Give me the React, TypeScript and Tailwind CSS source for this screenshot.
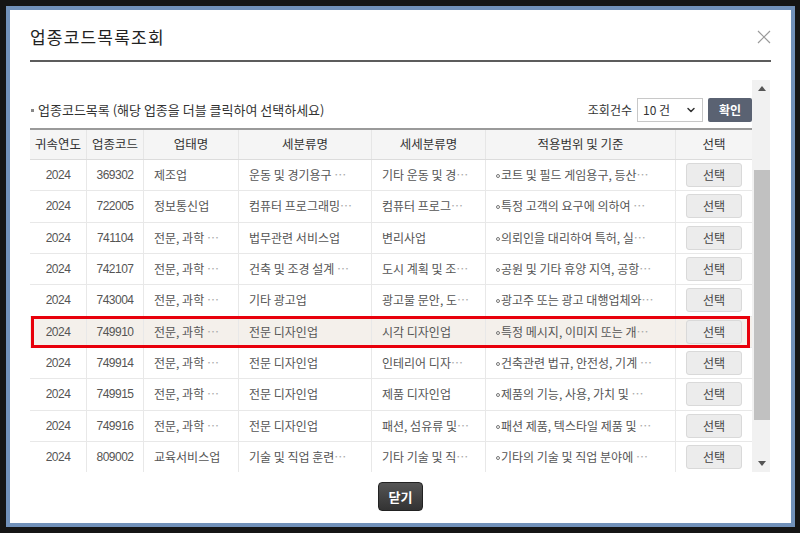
import { ChevronDown } from "lucide-react";

const font = { fontFamily: '"Noto Sans CJK KR", "Liberation Sans", sans-serif' };

const columns = [
  { label: "귀속연도", width: "w-[57px]", align: "center" },
  { label: "업종코드", width: "w-[57px]", align: "center" },
  { label: "업태명", width: "w-[95px]", align: "left" },
  { label: "세분류명", width: "w-[133px]", align: "left" },
  { label: "세세분류명", width: "w-[114px]", align: "left" },
  { label: "적용범위 및 기준", width: "w-[190px]", align: "left" },
  { label: "선택", width: "w-[76px]", align: "center" },
];

// "◦" marks the bullet of the scope column, a trailing "…" is drawn lighter
const rows = [
  ["2024", "369302", "제조업", "운동 및 경기용구 …", "기타 운동 및 경…", "◦코트 및 필드 게임용구, 등산…"],
  ["2024", "722005", "정보통신업", "컴퓨터 프로그래밍…", "컴퓨터 프로그…", "◦특정 고객의 요구에 의하여 …"],
  ["2024", "741104", "전문, 과학 …", "법무관련 서비스업", "변리사업", "◦의뢰인을 대리하여 특허, 실…"],
  ["2024", "742107", "전문, 과학 …", "건축 및 조경 설계 …", "도시 계획 및 조…", "◦공원 및 기타 휴양 지역, 공항…"],
  ["2024", "743004", "전문, 과학 …", "기타 광고업", "광고물 문안, 도…", "◦광고주 또는 광고 대행업체와…"],
  ["2024", "749910", "전문, 과학 …", "전문 디자인업", "시각 디자인업", "◦특정 메시지, 이미지 또는 개…"],
  ["2024", "749914", "전문, 과학 …", "전문 디자인업", "인테리어 디자…", "◦건축관련 법규, 안전성, 기계 …"],
  ["2024", "749915", "전문, 과학 …", "전문 디자인업", "제품 디자인업", "◦제품의 기능, 사용, 가치 및 …"],
  ["2024", "749916", "전문, 과학 …", "전문 디자인업", "패션, 섬유류 및…", "◦패션 제품, 텍스타일 제품 및 …"],
  ["2024", "809002", "교육서비스업", "기술 및 직업 훈련…", "기타 기술 및 직…", "◦기타의 기술 및 직업 분야에 …"],
];

const Cell = ({ text }: { text: string }) => {
  let body = text;
  const bullet = body.startsWith("◦");
  if (bullet) body = body.slice(1);
  const dots = body.endsWith("…");
  if (dots) body = body.slice(0, -1);
  return (
    <span className="whitespace-pre">
      {bullet && (
        <span className="inline-block w-[4px] h-[4px] rounded-full border border-[#777] mr-[1px] align-middle -mt-[2px]" />
      )}
      {body}
      {dots && <span className="text-[#aaa]">…</span>}
    </span>
  );
};

const App = () => {
  return (
    <div
      className="w-[800px] h-[533px] bg-[#151515] pt-[6px] pl-[6px] pr-[5px] pb-[6px]"
      style={font}
    >
      <div className="h-full border-4 border-[#7191ba] bg-white flex flex-col">
        {/* Title */}
        <div className="h-[50px] px-[20px] flex items-center justify-between pt-[4px]">
          <h1 className="text-[17px] tracking-[1.2px] text-[#222]">업종코드목록조회</h1>
          <svg width="14" height="14" viewBox="0 0 14 14">
            <path d="M1 1 L13 13 M13 1 L1 13" stroke="#9a9a9a" strokeWidth="1.2" fill="none" />
          </svg>
        </div>
        <div className="mx-[20px] h-[2px] bg-[#5c5c5c]" />

        {/* Scroll area */}
        <div className="mt-[18px] ml-[20px] mr-[21px] h-[392px] flex overflow-hidden">
          <div className="flex-1 overflow-hidden pt-[18px]">
            <div className="h-[24px] flex items-center justify-between">
              <div className="flex items-center text-[13px] text-[#333] pl-[1px]">
                <span className="w-[3px] h-[3px] bg-[#888] mr-[4px]" />
                업종코드목록 (해당 업종을 더블 클릭하여 선택하세요)
              </div>
              <div className="flex items-center">
                <span className="text-[12px] text-[#333] mr-[5px]">조회건수</span>
                <div className="w-[66px] h-[24px] border border-[#c8c8c8] flex items-center justify-between px-[5px] text-[12px] text-[#333]">
                  <span>10 건</span>
                  <ChevronDown size={12} strokeWidth={3} color="#333" />
                </div>
                <button className="ml-[5px] w-[44px] h-[24px] rounded-[2px] bg-[#5a6272] text-white text-[12px] font-bold">
                  확인
                </button>
              </div>
            </div>

            {/* Table */}
            <div className="mt-[6px] border-t-2 border-[#9a9a9a]">
              <div className="h-[30px] flex bg-[#f5f5f5] border-b border-[#dcdcdc] text-[12.5px] text-[#333]">
                {columns.map((c, i) => (
                  <div
                    key={c.label}
                    className={`${c.width} flex items-center justify-center ${i < 6 ? "border-r border-[#e6e6e6]" : ""}`}
                  >
                    {c.label}
                  </div>
                ))}
              </div>
              {rows.map((r) => {
                const picked = r[1] === "749910";
                return (
                  <div
                    key={r[1]}
                    className={`relative h-[31.33px] flex border-b border-[#e8e8e8] text-[12px] text-[#555] ${picked ? "bg-[#f4f0eb]" : "bg-white"}`}
                  >
                    {r.map((t, i) => (
                      <div
                        key={i}
                        className={`${columns[i].width} flex items-center border-r border-[#e8e8e8] overflow-hidden ${columns[i].align === "center" ? "justify-center" : "pl-[10px]"}`}
                        style={i < 2 ? { fontFamily: '"Liberation Sans", sans-serif', letterSpacing: "-0.5px" } : undefined}
                      >
                        <Cell text={t} />
                      </div>
                    ))}
                    <div className="w-[76px] flex items-center justify-center">
                      <button className="w-[56px] h-[24px] rounded-[3px] border border-[#d9d9d9] bg-[#ececec] text-[12px] text-[#444]">
                        선택
                      </button>
                    </div>
                    {picked && (
                      <div className="absolute -top-[1px] -bottom-[1px] left-[1px] right-[2px] border-[3px] border-[#e8000b] pointer-events-none" />
                    )}
                  </div>
                );
              })}
            </div>
          </div>

          {/* Scrollbar */}
          <div className="w-[18px] h-full bg-[#f1f1f1] flex flex-col">
            <div className="h-[17px] flex items-center justify-center pl-[2px]">
              <svg width="8" height="5" viewBox="0 0 8 5">
                <path d="M0 5 L4 0 L8 5 Z" fill="#555" />
              </svg>
            </div>
            <div className="mt-[73px] ml-[2px] h-[250px] bg-[#c1c1c1]" />
            <div className="flex-1" />
            <div className="h-[17px] flex items-center justify-center pl-[2px]">
              <svg width="8" height="5" viewBox="0 0 8 5">
                <path d="M0 0 L8 0 L4 5 Z" fill="#555" />
              </svg>
            </div>
          </div>
        </div>

        {/* Footer */}
        <div className="flex justify-center pt-[10px]">
          <button className="w-[45px] h-[29px] rounded-[4px] border border-[#222] bg-gradient-to-b from-[#555] to-[#333] text-white text-[13px] font-bold">
            닫기
          </button>
        </div>
      </div>
    </div>
  );
};

export default App;
